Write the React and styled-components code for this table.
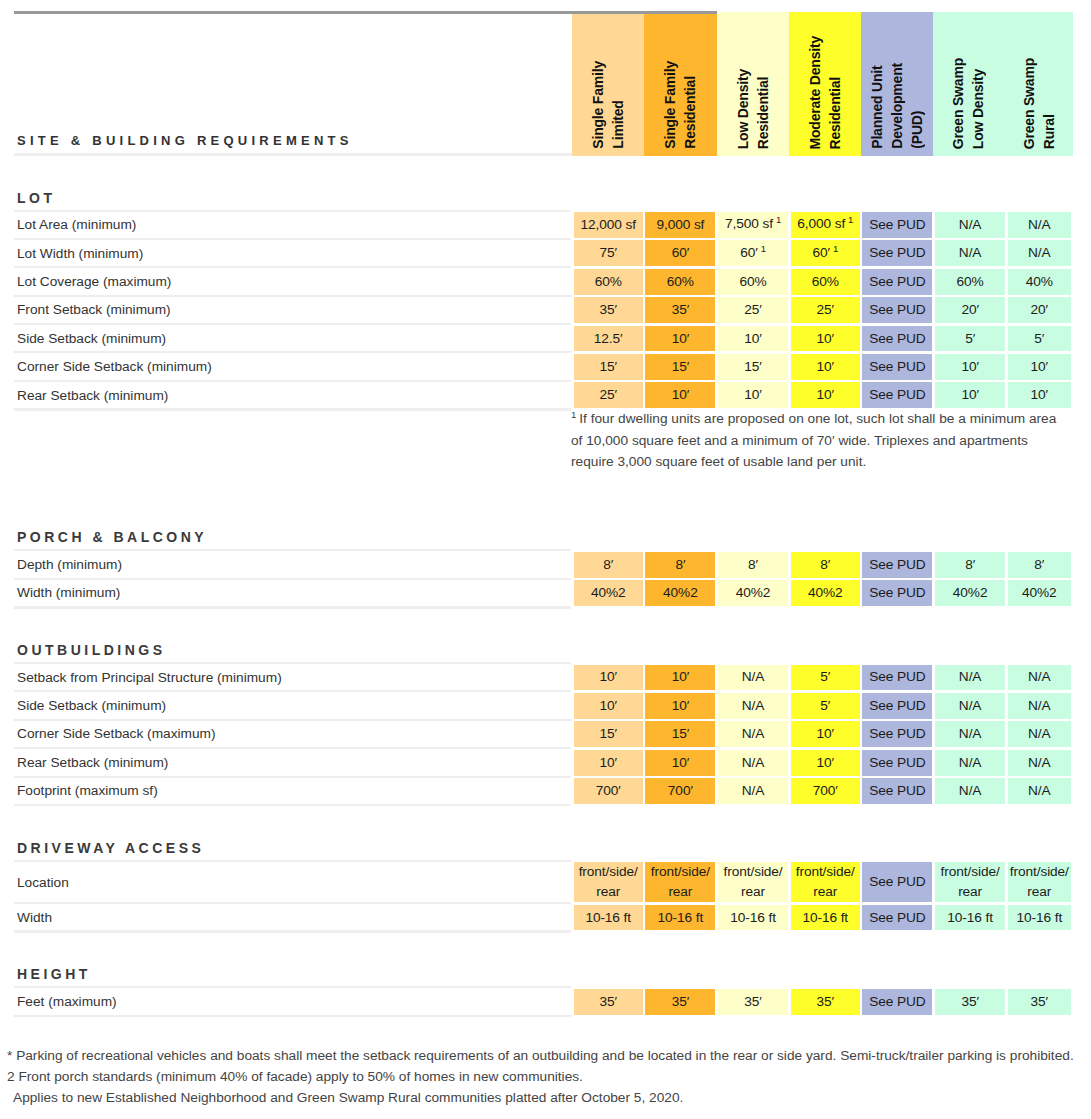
import React from 'react';
import styled, { createGlobalStyle } from 'styled-components';

const GlobalStyle = createGlobalStyle`
  html, body { margin: 0; padding: 0; background: #ffffff; }
  body { font-family: "Liberation Sans", Arial, sans-serif; color: #333; }
`;

const COLORS = ['#fed894', '#fdb62d', '#fefec8', '#fefe2a', '#adb6dc', '#c9fde1', '#c9fde1'];

const Page = styled.div`
  width: 1091px;
  box-sizing: border-box;
  padding: 11px 0 20px 14px;
`;

const HeaderRow = styled.div`
  display: grid;
  grid-template-columns: 558px 71.7px 73.4px 72px 71.7px 72.1px 71.1px 69.1px;
  align-items: end;
  height: 145px;
`;

const HeaderTitle = styled.div`
  height: 145px;
  box-sizing: border-box;
  border-top: 3px solid #999;
  border-bottom: 3px solid #eee;
  display: flex;
  align-items: flex-end;
  padding: 0 0 5px 3px;
  font-size: 13px;
  line-height: 15px;
  font-weight: bold;
  letter-spacing: 4.25px;
  color: #333;
  white-space: nowrap;
`;

const HeaderCell = styled.div`
  height: ${p => (p.$ruled ? 145 : 144)}px;
  box-sizing: border-box;
  border-top: ${p => (p.$ruled ? '3px solid #999' : '0')};
  background: ${p => p.$bg};
  display: flex;
  justify-content: center;
  align-items: flex-end;
  padding-bottom: 7px;
`;

const VerticalLabel = styled.span`
  writing-mode: vertical-rl;
  transform: rotate(180deg);
  font-size: 14px;
  line-height: 20px;
  font-weight: bold;
  letter-spacing: -0.2px;
  color: #111;
  white-space: nowrap;
`;

const Section = styled.section`
  margin-top: 31.5px;
`;

const SectionTitle = styled.h2`
  margin: 0 0 2px;
  padding-left: 3px;
  height: 20px;
  font-size: 14px;
  line-height: 20px;
  font-weight: bold;
  letter-spacing: 3.5px;
  color: #3a3a3a;
`;

const Row = styled.div`
  display: grid;
  grid-template-columns: 557px 69px 70px 70px 69px 70px 70px 63px;
  column-gap: 2.7px;
  height: ${p => p.$h || 28.4}px;
`;

const Label = styled.div`
  border-top: 2.5px solid #eee;
  padding-left: 3px;
  display: flex;
  align-items: center;
  font-size: 13.7px;
  color: #333;
  white-space: nowrap;
`;

const Cell = styled.div`
  margin-top: 2.5px;
  background: ${p => p.$bg};
  display: flex;
  align-items: center;
  justify-content: center;
  text-align: center;
  font-size: 13.7px;
  line-height: 20px;
  letter-spacing: -0.1px;
  color: #1c1c1c;
  white-space: nowrap;
`;

const Sup = styled.span`
  font-size: 9.5px;
  position: relative;
  top: -5px;
  margin-left: 3px;
`;

const Rule = styled.div`
  height: 2.5px;
  background: #eee;
`;

const FootRow = styled.div`
  display: grid;
  grid-template-columns: 557px 1fr;
  margin-bottom: 55px;
`;

const Footnote = styled.p`
  margin: 0;
  font-size: 13.7px;
  line-height: 21px;
  color: #444;
  white-space: nowrap;
`;

const FootMark = styled.span`
  font-size: 9.5px;
  position: relative;
  top: -5px;
  margin-right: 3px;
`;

const Notes = styled.div`
  margin: 28px 0 0 -7px;
  font-size: 13.7px;
  line-height: 21px;
  color: #444;
`;

const NoteLine = styled.div`
  white-space: nowrap;
  padding-left: ${p => p.$indent || 0}px;
`;

const HEADERS = [
  ['Single Family', 'Limited'],
  ['Single Family', 'Residential'],
  ['Low Density', 'Residential'],
  ['Moderate Density', 'Residential'],
  ['Planned Unit', 'Development', '(PUD)'],
  ['Green Swamp', 'Low Density'],
  ['Green Swamp', 'Rural'],
];

const P = '\u2032';
const S1 = { sup: '1' };

const sections = [
  {
    title: 'LOT',
    footnote: true,
    rows: [
      ['Lot Area (minimum)', ['12,000 sf', '9,000 sf', ['7,500 sf', S1], ['6,000 sf', S1], 'See PUD', 'N/A', 'N/A']],
      ['Lot Width (minimum)', [`75${P}`, `60${P}`, [`60${P}`, S1], [`60${P}`, S1], 'See PUD', 'N/A', 'N/A']],
      ['Lot Coverage (maximum)', ['60%', '60%', '60%', '60%', 'See PUD', '60%', '40%']],
      ['Front Setback (minimum)', [`35${P}`, `35${P}`, `25${P}`, `25${P}`, 'See PUD', `20${P}`, `20${P}`]],
      ['Side Setback (minimum)', [`12.5${P}`, `10${P}`, `10${P}`, `10${P}`, 'See PUD', `5${P}`, `5${P}`]],
      ['Corner Side Setback (minimum)', [`15${P}`, `15${P}`, `15${P}`, `10${P}`, 'See PUD', `10${P}`, `10${P}`]],
      ['Rear Setback (minimum)', [`25${P}`, `10${P}`, `10${P}`, `10${P}`, 'See PUD', `10${P}`, `10${P}`]],
    ],
  },
  {
    title: 'PORCH & BALCONY',
    rows: [
      ['Depth (minimum)', [`8${P}`, `8${P}`, `8${P}`, `8${P}`, 'See PUD', `8${P}`, `8${P}`]],
      ['Width (minimum)', ['40%2', '40%2', '40%2', '40%2', 'See PUD', '40%2', '40%2']],
    ],
  },
  {
    title: 'OUTBUILDINGS',
    rows: [
      ['Setback from Principal Structure (minimum)', [`10${P}`, `10${P}`, 'N/A', `5${P}`, 'See PUD', 'N/A', 'N/A']],
      ['Side Setback (minimum)', [`10${P}`, `10${P}`, 'N/A', `5${P}`, 'See PUD', 'N/A', 'N/A']],
      ['Corner Side Setback (maximum)', [`15${P}`, `15${P}`, 'N/A', `10${P}`, 'See PUD', 'N/A', 'N/A']],
      ['Rear Setback (minimum)', [`10${P}`, `10${P}`, 'N/A', `10${P}`, 'See PUD', 'N/A', 'N/A']],
      ['Footprint (maximum sf)', [`700${P}`, `700${P}`, 'N/A', `700${P}`, 'See PUD', 'N/A', 'N/A']],
    ],
  },
  {
    title: 'DRIVEWAY ACCESS',
    rows: [
      ['Location', ['FSR', 'FSR', 'FSR', 'FSR', 'See PUD', 'FSR', 'FSR'], 42.1],
      ['Width', ['10-16 ft', '10-16 ft', '10-16 ft', '10-16 ft', 'See PUD', '10-16 ft', '10-16 ft']],
    ],
  },
  {
    title: 'HEIGHT',
    rows: [
      ['Feet (maximum)', [`35${P}`, `35${P}`, `35${P}`, `35${P}`, 'See PUD', `35${P}`, `35${P}`]],
    ],
  },
];

function Value({ v }) {
  if (v === 'FSR') {
    return (
      <span>
        front/side/
        <br />
        rear
      </span>
    );
  }
  if (Array.isArray(v)) {
    return (
      <span>
        {v[0]}
        <Sup>{v[1].sup}</Sup>
      </span>
    );
  }
  return <span>{v}</span>;
}

export default function App() {
  return (
    <Page>
      <GlobalStyle />
      <HeaderRow>
        <HeaderTitle>SITE &amp; BUILDING REQUIREMENTS</HeaderTitle>
        {HEADERS.map((lines, i) => (
          <HeaderCell key={i} $bg={COLORS[i]} $ruled={i < 2}>
            <VerticalLabel>
              {lines.map((l, j) => (
                <React.Fragment key={j}>
                  {j > 0 && <br />}
                  {l}
                </React.Fragment>
              ))}
            </VerticalLabel>
          </HeaderCell>
        ))}
      </HeaderRow>

      {sections.map(sec => (
        <Section key={sec.title}>
          <SectionTitle>{sec.title}</SectionTitle>
          {sec.rows.map(([label, vals, h]) => (
            <Row key={label} $h={h}>
              <Label>{label}</Label>
              {vals.map((v, i) => (
                <Cell key={i} $bg={COLORS[i]}>
                  <Value v={v} />
                </Cell>
              ))}
            </Row>
          ))}
          {sec.footnote ? (
            <FootRow>
              <Rule />
              <Footnote>
                <FootMark>1</FootMark>
                If four dwelling units are proposed on one lot, such lot shall be a minimum area
                <br />
                of 10,000 square feet and a minimum of 70{P} wide. Triplexes and apartments
                <br />
                require 3,000 square feet of usable land per unit.
              </Footnote>
            </FootRow>
          ) : (
            <Row $h={2.5}>
              <Rule />
            </Row>
          )}
        </Section>
      ))}

      <Notes>
        <NoteLine>
          * Parking of recreational vehicles and boats shall meet the setback requirements of an outbuilding and be located in the rear or side yard. Semi-truck/trailer parking is prohibited.
        </NoteLine>
        <NoteLine>2 Front porch standards (minimum 40% of facade) apply to 50% of homes in new communities.</NoteLine>
        <NoteLine $indent={6}>
          Applies to new Established Neighborhood and Green Swamp Rural communities platted after October 5, 2020.
        </NoteLine>
      </Notes>
    </Page>
  );
}
